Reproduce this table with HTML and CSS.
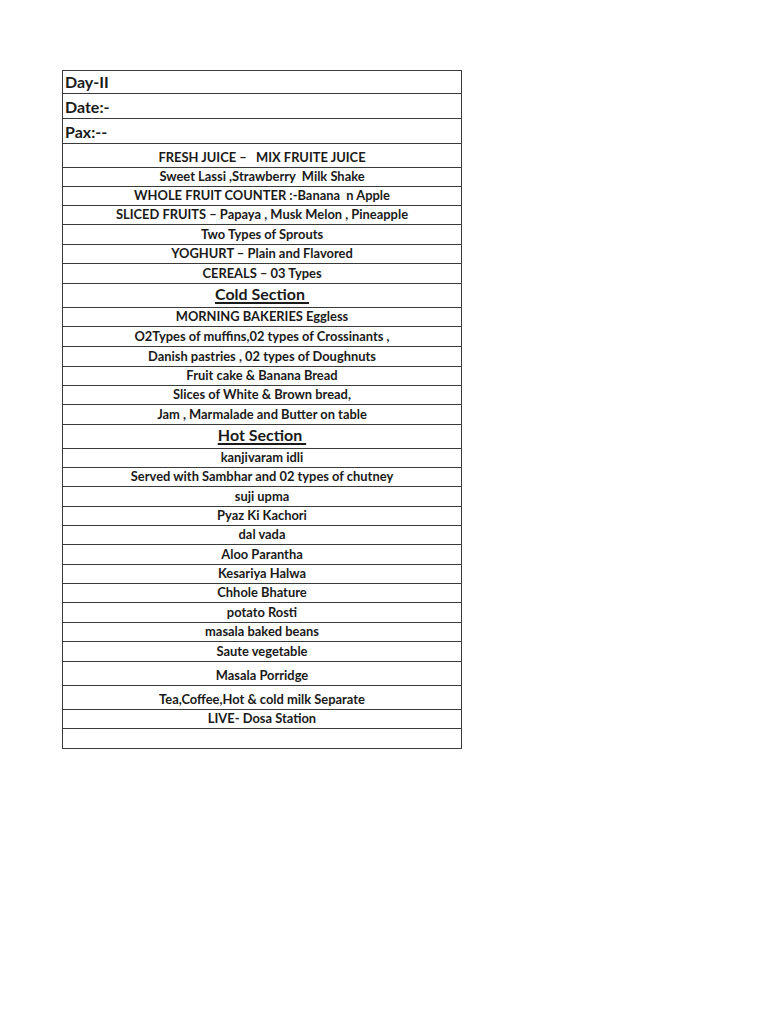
FILE: index.html
```html
<!DOCTYPE html>
<html>
<head>
<meta charset="utf-8">
<link rel="stylesheet" href="styles.css">
</head>
<body>
<div class="sheet">
  <div class="row head h23">Day-II</div>
  <div class="row head h25">Date:-</div>
  <div class="row head h25">Pax:--</div>
  <div class="row h24">FRESH JUICE –&nbsp;&nbsp; MIX FRUITE JUICE</div>
  <div class="row h19">Sweet Lassi ,Strawberry&nbsp; Milk Shake</div>
  <div class="row h19">WHOLE FRUIT COUNTER :-Banana&nbsp; n Apple</div>
  <div class="row h19">SLICED FRUITS – Papaya , Musk Melon , Pineapple</div>
  <div class="row h20">Two Types of Sprouts</div>
  <div class="row h19">YOGHURT – Plain and Flavored</div>
  <div class="row h20">CEREALS – 03 Types</div>
  <div class="row section h24"><span class="u">Cold Section&nbsp;</span></div>
  <div class="row h19">MORNING BAKERIES Eggless</div>
  <div class="row h20">O2Types of muffins,02 types of Crossinants ,</div>
  <div class="row h20">Danish pastries , 02 types of Doughnuts</div>
  <div class="row h19">Fruit cake &amp; Banana Bread</div>
  <div class="row h19">Slices of White &amp; Brown bread,</div>
  <div class="row h20">Jam , Marmalade and Butter on table</div>
  <div class="row section h24"><span class="u">Hot Section&nbsp;</span></div>
  <div class="row h19">kanjivaram idli</div>
  <div class="row h19">Served with Sambhar and 02 types of chutney</div>
  <div class="row h20">suji upma</div>
  <div class="row h19">Pyaz Ki Kachori</div>
  <div class="row h19">dal vada</div>
  <div class="row h20">Aloo Parantha</div>
  <div class="row h19">Kesariya Halwa</div>
  <div class="row h19">Chhole Bhature</div>
  <div class="row h20">potato Rosti</div>
  <div class="row h19">masala baked beans</div>
  <div class="row h20">Saute vegetable</div>
  <div class="row h24">Masala Porridge</div>
  <div class="row h24">Tea,Coffee,Hot &amp; cold milk Separate</div>
  <div class="row h19">LIVE- Dosa Station</div>
  <div class="row h20"></div>
</div>
</body>
</html>
```
FILE: styles.css
```css
html, body {
  margin: 0;
  padding: 0;
  background: #ffffff;
}
body {
  font-family: "Lato", "Open Sans", "Liberation Sans", sans-serif;
  color: #1a1a1a;
}
.sheet {
  width: 400px;
  margin: 70px 0 0 62px;
  border: 1px solid #3a3a3a;
  border-bottom: none;
  box-sizing: border-box;
}
.row {
  box-sizing: border-box;
  border-bottom: 1px solid #3a3a3a;
  display: flex;
  align-items: flex-end;
  justify-content: center;
  font-size: 12.9px;
  font-weight: 700;
  line-height: 15px;
  padding-bottom: 2px;
  white-space: pre;
}
.head {
  justify-content: flex-start;
  padding-left: 2px;
  font-size: 16px;
  line-height: 20px;
  padding-bottom: 1px;
}
.section {
  font-size: 16px;
  line-height: 20px;
  padding-bottom: 3px;
}
.u {
  text-decoration: underline;
  text-decoration-thickness: 1.5px;
  text-underline-offset: 2px;
}
.h19 { height: 19px; }
.h20 { height: 20px; }
.h23 { height: 23px; }
.h24 { height: 24px; }
.h25 { height: 25px; }
```
